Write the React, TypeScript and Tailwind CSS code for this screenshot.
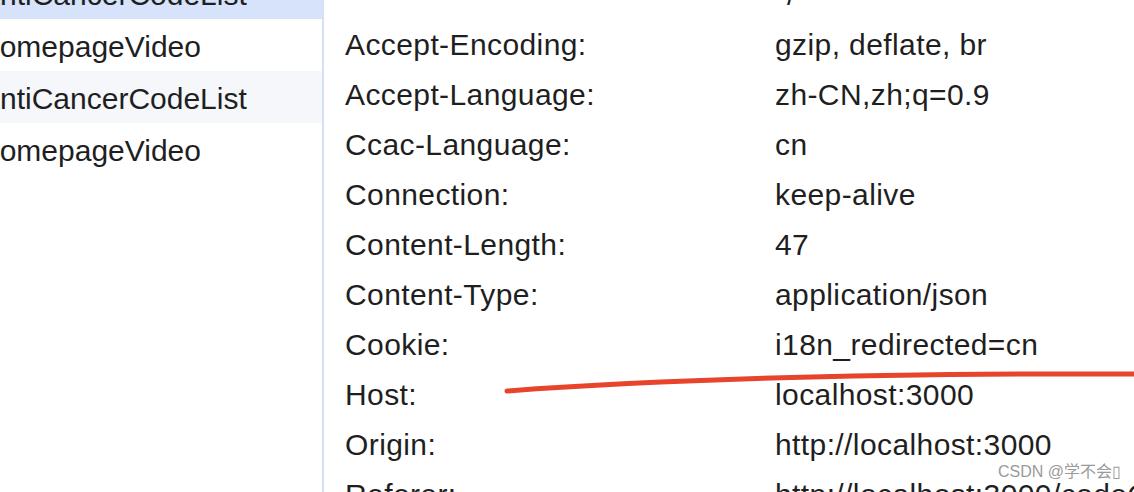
import React from "react";

const requests = [
  { name: "AntiCancerCodeList", tone: "active" },
  { name: "HomepageVideo", tone: "plain" },
  { name: "AntiCancerCodeList", tone: "striped" },
  { name: "HomepageVideo", tone: "plain" },
];

const headers: [string, string][] = [
  ["", "*/*"],
  ["Accept-Encoding:", "gzip, deflate, br"],
  ["Accept-Language:", "zh-CN,zh;q=0.9"],
  ["Ccac-Language:", "cn"],
  ["Connection:", "keep-alive"],
  ["Content-Length:", "47"],
  ["Content-Type:", "application/json"],
  ["Cookie:", "i18n_redirected=cn"],
  ["Host:", "localhost:3000"],
  ["Origin:", "http://localhost:3000"],
  ["Referer:", "http://localhost:3000/codeQuery"],
];

const toneClass: Record<string, string> = {
  active: "bg-[#d6e3fb]",
  plain: "bg-white",
  striped: "bg-[#f5f7fb]",
};

export default function App() {
  return (
    <div
      className="relative flex w-[1134px] h-[492px] overflow-hidden bg-white text-[#1f1f1f]"
      style={{ fontFamily: '"Liberation Sans", Arial, sans-serif' }}
    >
      {/* request list */}
      <div className="w-[322px] shrink-0 overflow-hidden">
        <div className="-mt-[33px] flex flex-col">
          {requests.map((r, i) => (
            <div
              key={i}
              className={`h-[52px] flex items-center whitespace-nowrap text-[30px] leading-[52px] ${toneClass[r.tone]}`}
            >
              <span className={r.name.startsWith("H") ? "-ml-[22px] pt-[3px]" : "-ml-[20px] pt-[3px]"}>{r.name}</span>
            </div>
          ))}
        </div>
      </div>

      <div className="w-[2px] shrink-0 bg-[#d3e1f7]" />

      {/* request headers */}
      <div className="flex-1 overflow-hidden pl-[21px]">
        <div className="-mt-[30px] flex flex-col">
          {headers.map(([k, v], i) => (
            <div key={i} className="h-[50px] flex items-center whitespace-nowrap text-[30px] leading-[50px] tracking-[0.4px]">
              <span className="w-[430px] shrink-0">{k}</span>
              <span>{v}</span>
            </div>
          ))}
        </div>
      </div>

      {/* hand-drawn annotation */}
      <svg className="absolute left-0 top-0 pointer-events-none" width="1134" height="492" viewBox="0 0 1134 492">
        <path
          d="M507 391 C 640 381, 820 373, 1140 374"
          fill="none"
          stroke="#e8432b"
          strokeWidth="5"
          strokeLinecap="round"
        />
      </svg>

      {/* watermark */}
      <div
        className="absolute right-[13px] bottom-[8px] text-[16px] text-[#9a9a9a] whitespace-nowrap"
        style={{ fontFamily: '"Liberation Sans", "Noto Sans CJK SC", sans-serif' }}
      >
        CSDN @学不会▯
      </div>
    </div>
  );
}
